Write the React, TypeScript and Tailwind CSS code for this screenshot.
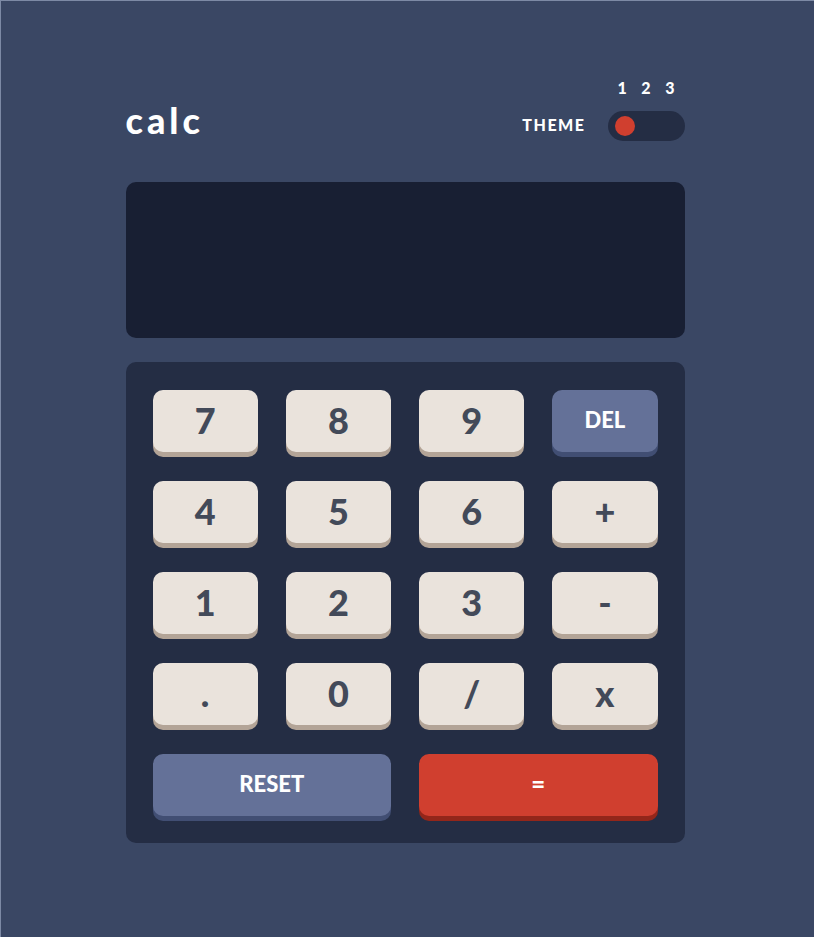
const keys: { label: string; kind?: "fn" | "eq"; wide?: boolean }[] = [
  { label: "7" },
  { label: "8" },
  { label: "9" },
  { label: "DEL", kind: "fn" },
  { label: "4" },
  { label: "5" },
  { label: "6" },
  { label: "+" },
  { label: "1" },
  { label: "2" },
  { label: "3" },
  { label: "-" },
  { label: "." },
  { label: "0" },
  { label: "/" },
  { label: "x" },
  { label: "RESET", kind: "fn", wide: true },
  { label: "=", kind: "eq", wide: true },
];

const Key = ({ label, kind, wide }: { label: string; kind?: "fn" | "eq"; wide?: boolean }) => {
  let cls =
    "bg-[#eae3dc] text-[#434a59] shadow-[0_5px_0_#b3a497] text-[36px] font-black hover:bg-[#fffffe]";
  if (kind === "fn") {
    cls = "bg-[#647198] text-white shadow-[0_5px_0_#414e73] text-[22px] font-black hover:bg-[#a2b3e1]";
  }
  if (kind === "eq") {
    cls = "bg-[#d03f2f] text-white shadow-[0_5px_0_#93261a] text-[24px] font-black hover:bg-[#f96c5b]";
  }
  return (
    <button
      type="button"
      className={`${wide ? "col-span-2" : ""} h-[62px] rounded-[10px] leading-none flex items-center justify-center pb-[2px] ${cls}`}
    >
      {label}
    </button>
  );
};

const App = () => {
  return (
    <div
      className="min-h-[937px] bg-[#3a4764] border-t border-l border-[#7d8aa5] flex justify-center pr-[5px]"
      style={{ fontFamily: "Lato, 'Noto Sans', sans-serif" }}
    >
      <div className="w-[559px] pt-[78px]">
        <header className="flex items-end justify-between">
          <h1 className="text-[36px] font-black text-white leading-none tracking-[4px] mb-[3px]">
            calc
          </h1>
          <div className="flex items-end gap-[22px]">
            <span className="text-[16px] font-black text-white tracking-[1.5px] leading-none mb-[8px]">
              THEME
            </span>
            <div className="flex flex-col">
              <div className="flex justify-between px-[10px] text-[16px] font-black text-white leading-[18px] mb-[14px]">
                <span>1</span>
                <span>2</span>
                <span>3</span>
              </div>
              <div className="w-[77px] h-[30px] rounded-full bg-[#242d44] flex items-center pl-[7px]">
                <span className="w-[20px] h-[20px] rounded-full bg-[#d03f2f]" />
              </div>
            </div>
          </div>
        </header>

        <div className="mt-[41px] h-[156px] rounded-[10px] bg-[#181f33]" />

        <div className="mt-[24px] rounded-[10px] bg-[#242d44] px-[27px] pt-[28px] pb-[27px] grid grid-cols-4 gap-x-[28px] gap-y-[29px]">
          {keys.map((k) => (
            <Key key={k.label} {...k} />
          ))}
        </div>
      </div>
    </div>
  );
};

export default App;
